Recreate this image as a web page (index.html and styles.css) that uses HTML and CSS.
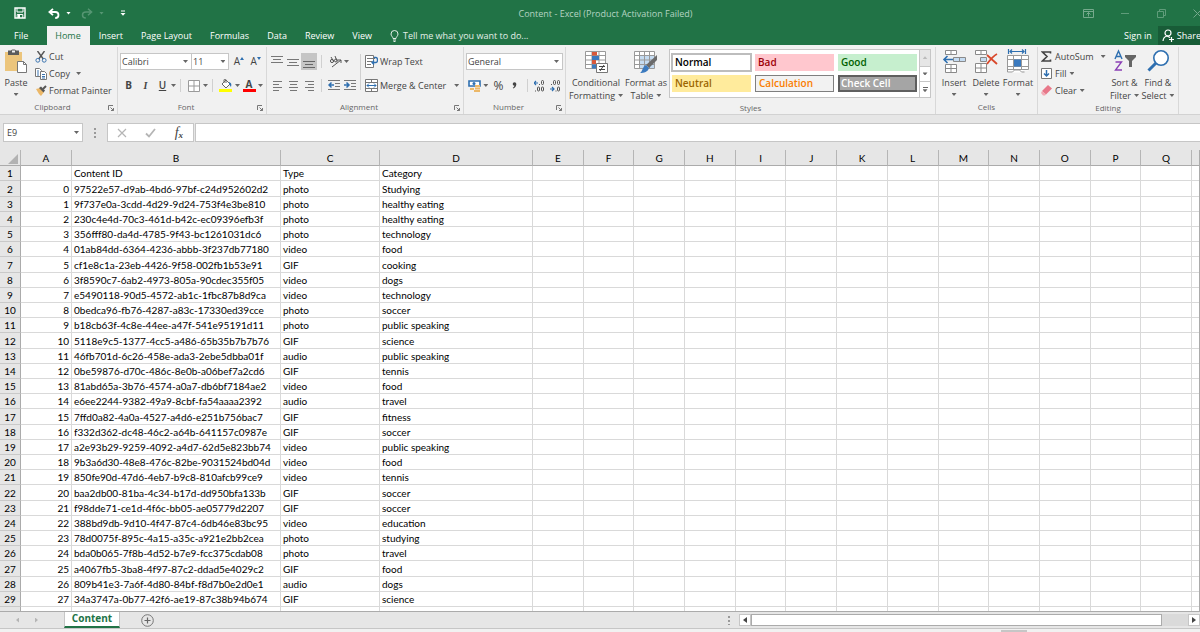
FILE: index.html
```html
<!DOCTYPE html>
<html lang="en">
<head>
<meta charset="utf-8">
<title>Content - Excel (Product Activation Failed)</title>
<link rel="stylesheet" href="styles.css">
</head>
<body>
<header class="titlebar">
  <div class="quick">
    <button class="tb save" aria-label="Save"><svg width="12" height="12" viewBox="0 0 12 12"><path d="M1 1h10v10H1z" fill="none" stroke="#fff" stroke-width="1.4"/><path d="M3 1v4h6V1M3.2 11V7.5h5.6V11" fill="none" stroke="#fff"/><path d="M4 8h2v3H4z" fill="#fff"/></svg></button>
    <button class="tb undo" aria-label="Undo"><svg width="12" height="11" viewBox="0 0 12 11"><path d="M5 .8L1.4 4 5 7.2M1.8 4h5.4c4.4 0 4.4 6 0 6" fill="none" stroke="#fff" stroke-width="1.8"/></svg></button>
    <button class="tb caret light" aria-label="Undo list"></button>
    <button class="tb redo" aria-label="Redo"><svg width="12" height="11" viewBox="0 0 12 11"><path d="M7 .8L10.600 4 7 7.200M10.200 4H4.800c-4.400 0-4.400 6 0 6" fill="none" stroke="#569673" stroke-width="1.500"/></svg></button>
    <button class="tb caret dim" aria-label="Redo list"></button>
    <button class="tb custom" aria-label="Customize"><svg width="6" height="7" viewBox="0 0 6 7"><path d="M1 1h4" stroke="#fff"/><path d="M.5 3h5L3 5.800z" fill="#fff"/></svg></button>
  </div>
  <h1 class="doc">Content - Excel (Product Activation Failed)</h1>
  <div class="winbtns">
    <button class="tb" aria-label="Ribbon options"><svg width="11" height="9" viewBox="0 0 11 9"><path d="M.5.5h10v8H.5zM.5 2.500h10M5.500 7.500v-4M3.500 5.500l2-2 2 2" fill="none" stroke="#75a98c"/></svg></button>
    <button class="tb" aria-label="Minimize"><svg width="9" height="9" viewBox="0 0 9 9"><path d="M0 4.500h8" stroke="#5f9c7a"/></svg></button>
    <button class="tb" aria-label="Restore"><svg width="9" height="9" viewBox="0 0 9 9"><path d="M.5 2.500h6v6h-6zM2.500 2.500v-2h6v6h-2" fill="none" stroke="#5f9c7a"/></svg></button>
    <button class="tb" aria-label="Close"><svg width="9" height="9" viewBox="0 0 9 9"><path d="M.5.5l8 8M8.500.5l-8 8" fill="none" stroke="#75a98c"/></svg></button>
  </div>
</header>

<nav class="tabs">
  <a class="tab file" href="#file">File</a>
  <a class="tab home" href="#home">Home</a>
  <a class="tab" href="#insert">Insert</a>
  <a class="tab" href="#layout">Page Layout</a>
  <a class="tab" href="#formulas">Formulas</a>
  <a class="tab" href="#data">Data</a>
  <a class="tab" href="#review">Review</a>
  <a class="tab" href="#view">View</a>
  <a class="tab tell" href="#tell"><svg width="9" height="12" viewBox="0 0 9 12"><path d="M3 8.500C3 7 1 6 1 4a3.500 3.500 0 0 1 7 0c0 2-2 3-2 4.500zM3 10h3M3.500 11.500h2" fill="none" stroke="#e3efe8"/></svg>Tell me what you want to do...</a>
  <a class="tab signin" href="#signin">Sign in</a>
  <a class="tab share" href="#share"><svg width="13" height="13" viewBox="0 0 13 13"><circle cx="6" cy="4" r="3" fill="none" stroke="#fff" stroke-width="1.200"/><path d="M1 12c.3-3 1.700-4.500 4-5l3 1.500M9.500 8v5M7 10.500h5" fill="none" stroke="#fff" stroke-width="1.200"/></svg>Share</a>
</nav>

<main class="ribbon">
  <section class="group clipboard">
    <div class="body">
      <button class="big paste"><svg width="24" height="25" viewBox="0 0 24 25"><path d="M1 3h17v19H1z" fill="#ecc57c"/><path d="M4 1.500h3C7 0 12 0 12 1.500h3V6H4z" fill="#5c5c5c"/><path d="M8 1.500h3v2H8z" fill="#f1f1f1"/><path d="M13.500 12.500h6l3 3v8h-9z" fill="#fff" stroke="#777"/><path d="M19.500 12.500v3h3" fill="none" stroke="#777"/></svg><span>Paste</span><i class="caret"></i></button>
      <div class="stack">
        <button class="row"><svg width="12" height="12" viewBox="0 0 12 12"><path d="M2.500 0l5.800 8M9.500 0L3.700 8" stroke="#555" stroke-width="1.400"/><circle cx="2.800" cy="9.300" r="1.900" fill="none" stroke="#3b74b0"/><circle cx="9.200" cy="9.300" r="1.900" fill="none" stroke="#3b74b0"/></svg>Cut</button>
        <button class="row"><svg width="12" height="12" viewBox="0 0 12 12"><path d="M.5.5h4l2 2v6h-6z" fill="#fff" stroke="#777"/><path d="M2 3h2M2 5h2M2 7h2" stroke="#3b74b0"/><path d="M5.500 3.500h4l2 2v6h-6z" fill="#fff" stroke="#777"/><path d="M7 6.500h3M7 8.500h3M7 10h3" stroke="#3b74b0"/></svg>Copy<i class="caret gap"></i></button>
        <button class="row"><svg width="12" height="12" viewBox="0 0 12 12"><path d="M1 4l4-1 4 4-3 4-2-2z" fill="#ecb868"/><path d="M4 3l2-1.500 4 4L8.500 7.500z" fill="#555"/><path d="M8 4l3-3" stroke="#555" stroke-width="2"/></svg>Format Painter</button>
      </div>
    </div>
    <footer>Clipboard<svg class="launch" width="6" height="6" viewBox="0 0 6 6"><path d="M.5 5V.5H5M2.500 2.500l3 3M5.500 3v2.500H3" fill="none" stroke="#777"/></svg></footer>
  </section>

  <section class="group font">
    <div class="body two">
      <div class="line">
        <label class="combo name"><select aria-label="Font"><option>Calibri</option></select></label><label class="combo size"><select aria-label="Font size"><option>11</option></select></label>
        <button class="ico growf" aria-label="Grow font">A<svg width="4" height="3" viewBox="0 0 4 3"><path d="M0 3l2-3 2 3z" fill="#2e6fb0"/></svg></button>
        <button class="ico shrinkf" aria-label="Shrink font">A<svg width="4" height="3" viewBox="0 0 4 3"><path d="M0 0h4L2 3z" fill="#2e6fb0"/></svg></button>
      </div>
      <div class="line">
        <button class="ico b">B</button><button class="ico i">I</button><button class="ico u">U</button><i class="caret"></i><i class="sep"></i>
        <button class="ico wide" aria-label="Borders"><svg width="12" height="12" viewBox="0 0 12 12"><path d="M.5.5h11v11H.5zM6 .5v11M.5 6h11" fill="#fff" stroke="#9a9a9a"/></svg></button><i class="caret"></i><i class="sep"></i>
        <button class="ico wide" aria-label="Fill color"><svg width="14" height="13" viewBox="0 0 14 13"><path d="M3 5l4-4 4 4-4 4z" fill="#fff" stroke="#666"/><path d="M5 4V1c0-1 2-1 2 0v3" fill="none" stroke="#666"/><path d="M10 3c3 1 2.500 3 2 5-1-1-1-2-2-3z" fill="#2e6fb0"/><path d="M0 10h13v3H0z" fill="#ff0"/></svg></button><i class="caret"></i>
        <button class="ico wide" aria-label="Font color"><span class="fc">A</span></button><i class="caret"></i>
      </div>
    </div>
    <footer>Font<svg class="launch" width="6" height="6" viewBox="0 0 6 6"><path d="M.5 5V.5H5M2.500 2.500l3 3M5.500 3v2.500H3" fill="none" stroke="#777"/></svg></footer>
  </section>

  <section class="group align">
    <div class="body two cols">
      <div class="pad">
        <div class="line">
          <button class="ico al" aria-label="Top align"><svg width="12" height="12" viewBox="0 0 12 12"><path d="M0 .5h12M2 3.500h8M0 6.500h12" stroke="#777"/></svg></button>
          <button class="ico al" aria-label="Middle align"><svg width="12" height="12" viewBox="0 0 12 12"><path d="M0 3.500h12M2 6.500h8M0 9.500h12" stroke="#777"/></svg></button>
          <button class="ico al on" aria-label="Bottom align"><svg width="12" height="12" viewBox="0 0 12 12"><path d="M0 5.500h12M2 8.500h8M0 11.500h12" stroke="#666"/></svg></button>
          <i class="sep"></i>
          <button class="ico wide" aria-label="Orientation"><svg width="13" height="12" viewBox="0 0 13 12"><path d="M3 11l9-7M9 4h3v3" fill="none" stroke="#555"/><circle cx="3" cy="5" r="1.600" fill="none" stroke="#555"/><path d="M2 1l3 5M6 0l2 5" stroke="#555"/><circle cx="7" cy="4.500" r="1.500" fill="none" stroke="#555"/></svg></button><i class="caret"></i>
        </div>
        <div class="line">
          <button class="ico al" aria-label="Align left"><svg width="11" height="11" viewBox="0 0 11 11"><path d="M1 1.500h9M1 4.500h6M1 7.500h9M1 10.500h6" stroke="#777"/></svg></button>
          <button class="ico al" aria-label="Center"><svg width="11" height="11" viewBox="0 0 11 11"><path d="M1 1.500h9M2 4.500h7M1 7.500h9M2 10.500h7" stroke="#777"/></svg></button>
          <button class="ico al" aria-label="Align right"><svg width="11" height="11" viewBox="0 0 11 11"><path d="M1 1.500h9M4 4.500h6M1 7.500h9M4 10.500h6" stroke="#777"/></svg></button>
          <i class="sep"></i>
          <button class="ico al" aria-label="Decrease indent"><svg width="12" height="11" viewBox="0 0 12 11"><path d="M0 .5h12M7 3.500h5M7 6.500h5M0 9.500h12" stroke="#777"/><path d="M6 5H1M3.500 2.500L1 5l2.500 2.500" fill="none" stroke="#2e6fb0" stroke-width="1.500"/></svg></button>
          <button class="ico al" aria-label="Increase indent"><svg width="12" height="11" viewBox="0 0 12 11"><path d="M0 .5h12M7 3.500h5M7 6.500h5M0 9.500h12" stroke="#777"/><path d="M0 5h5M2.500 2.500L5 5 2.500 7.500" fill="none" stroke="#2e6fb0" stroke-width="1.500"/></svg></button>
        </div>
      </div>
      <i class="sep tall"></i>
      <div class="pad merge">
        <button class="row"><svg width="13" height="13" viewBox="0 0 13 13"><path d="M.5.5h8v12h-8z" fill="#fff" stroke="#777"/><path d="M2 3.500h8M2 6.500h5M2 9.500h4" stroke="#777"/><path d="M9 2.500h2c2 0 2 5 0 5H7M9 5.500l-2 2 2 2" fill="none" stroke="#2e6fb0" stroke-width="1.300"/></svg>Wrap Text</button>
        <button class="row"><svg width="13" height="13" viewBox="0 0 13 13"><path d="M.5.5h12v12H.5zM.5 3.500h12M.5 9.500h12M6.500.5v3M6.500 9.500v3" fill="#fff" stroke="#777"/><path d="M2 6.500h9M4 4.500l-2 2 2 2M9 4.500l2 2-2 2" fill="none" stroke="#2e6fb0"/></svg>Merge &amp; Center<i class="caret gap"></i></button>
      </div>
    </div>
    <footer>Alignment<svg class="launch" width="6" height="6" viewBox="0 0 6 6"><path d="M.5 5V.5H5M2.500 2.500l3 3M5.500 3v2.500H3" fill="none" stroke="#777"/></svg></footer>
  </section>

  <section class="group number">
    <div class="body two">
      <div class="line"><label class="combo general"><select aria-label="Number format"><option>General</option></select></label></div>
      <div class="line">
        <button class="ico wide" aria-label="Accounting format"><svg width="13" height="12" viewBox="0 0 13 12"><path d="M1 1h11v5H1z" fill="#fff" stroke="#2e6fb0" stroke-width="1.600"/><circle cx="6" cy="3.500" r="1.500" fill="#2e6fb0"/><path d="M7 5h5v2H7zM7 7.500h5v2H7zM6 10h6v2H6zM2 8h4v2H2z" fill="#ecb868"/></svg></button><i class="caret"></i>
        <button class="ico pct">%</button><button class="ico comma" aria-label="Comma style"><svg width="5" height="7" viewBox="0 0 5 7"><circle cx="2.500" cy="2" r="1.800" fill="#444"/><path d="M4.200 2c.2 2-1 3.500-3 4.500l-.4-.7C2 5 2.500 4 2.500 3z" fill="#444"/></svg></button><i class="sep"></i>
        <button class="ico dec" aria-label="Increase decimal"><svg width="11" height="12" viewBox="0 0 11 12"><path d="M0 3h4M2 1L0 3l2 2" fill="none" stroke="#2e6fb0" stroke-width="1.200"/><path d="M5 4.500h1M1 11h1" stroke="#555"/><rect x="7.500" y=".5" width="2" height="4" rx="1" fill="none" stroke="#555"/><rect x="3.500" y="7" width="2" height="4" rx="1" fill="none" stroke="#555"/><rect x="7.500" y="7" width="2" height="4" rx="1" fill="none" stroke="#555"/></svg></button>
        <button class="ico dec" aria-label="Decrease decimal"><svg width="11" height="12" viewBox="0 0 11 12"><path d="M0 9h4M2 7l2 2-2 2" fill="none" stroke="#2e6fb0" stroke-width="1.200"/><path d="M5.500 11h1M1 4.500h1" stroke="#555"/><rect x="7.500" y="7" width="2" height="4" rx="1" fill="none" stroke="#555"/><rect x="3.500" y=".5" width="2" height="4" rx="1" fill="none" stroke="#555"/><rect x="7.500" y=".5" width="2" height="4" rx="1" fill="none" stroke="#555"/></svg></button>
      </div>
    </div>
    <footer>Number<svg class="launch" width="6" height="6" viewBox="0 0 6 6"><path d="M.5 5V.5H5M2.500 2.500l3 3M5.500 3v2.500H3" fill="none" stroke="#777"/></svg></footer>
  </section>

  <section class="group styles">
    <div class="body">
      <button class="big cond"><svg width="24" height="25" viewBox="0 0 24 25"><path d="M1.500 2.500h20v17h-20zM1.500 6.500h20M1.500 11h20M1.500 15.500h20M8 2.500v17M15 2.500v17" fill="#fff" stroke="#999"/><path d="M8 3h5v3.500H8zM8 11h4v4H8z" fill="#d9583a"/><path d="M8 7h7v4H8zM8 15.500h4v4H8z" fill="#3b7abf"/><path d="M12.500 14.500h11v9h-11z" fill="#fff" stroke="#777"/><path d="M15 17.500h6M15 20.500h6M20 16l-4 6" stroke="#444"/></svg><span>Conditional</span><span>Formatting<i class="caret"></i></span></button>
      <button class="big fmt"><svg width="26" height="25" viewBox="0 0 26 25"><path d="M1.500 2.500h20v17h-20z" fill="#fff"/><path d="M6 7h16v12H6z" fill="#c5dcf2"/><path d="M1.500 2.500h20v17h-20zM1.500 6.500h20M1.500 11h20M1.500 15.500h20M6.500 2.500v17M11.500 2.500v17M16.500 2.500v17" fill="none" stroke="#999"/><path d="M24 6v5l-8 8-3-3z" fill="#6b6b6b"/><path d="M13 16l3 3c-1 4-5 5-9 5 3-2 2-6 6-8z" fill="#3b7abf"/></svg><span>Format as</span><span>Table<i class="caret"></i></span></button>
      <div class="gallery">
        <div class="swatches">
          <button class="sw normal">Normal</button><button class="sw bad">Bad</button><button class="sw good">Good</button>
          <button class="sw neutral">Neutral</button><button class="sw calc">Calculation</button><button class="sw check">Check Cell</button>
        </div>
        <div class="scroll"><button aria-label="Scroll up"><i class="caret up"></i></button><button aria-label="Scroll down"><i class="caret"></i></button><button class="more" aria-label="More styles"><i class="caret"></i></button></div>
      </div>
    </div>
    <footer>Styles</footer>
  </section>

  <section class="group cells">
    <div class="body">
      <button class="big"><svg width="24" height="25" viewBox="0 0 24 25"><path d="M3.500 1.500h11v4h-11zM9 1.500v4M3.500 15.500h11v8h-11zM3.500 19.500h11M9 15.500v8" fill="#fff" stroke="#8a8a8a"/><path d="M11.500 8.500h12v4h-12zM17.500 8.500v4" fill="#c5dcf2" stroke="#8a8a8a"/><path d="M11 10.500H2M5.500 7L2 10.500 5.500 14" fill="none" stroke="#2e6fb0" stroke-width="1.600"/></svg><span>Insert</span><i class="caret"></i></button>
      <button class="big"><svg width="24" height="25" viewBox="0 0 24 25"><path d="M1.500 1.500h11v4h-11zM7 1.500v4M1.500 14.500h11v9h-11zM1.500 19h11M7 14.500v9" fill="#fff" stroke="#8a8a8a"/><path d="M6.500 8.500h6v4h-6z" fill="#c5dcf2" stroke="#8a8a8a"/><path d="M13 6l10 9M23 5c-4 2-7 6-10 10" fill="none" stroke="#d9482b" stroke-width="1.800"/></svg><span>Delete</span><i class="caret"></i></button>
      <button class="big"><svg width="24" height="25" viewBox="0 0 24 25"><path d="M2.500 0v5M19.500 0v5M4 2.500h14M6 .5l-2 2 2 2M16 .5l2 2-2 2" fill="none" stroke="#2e6fb0" stroke-width="1.200"/><path d="M1.500 6.500h21v15h-5l-2 2h-14z" fill="#fff"/><path d="M1.500 6.500h21v14h-21zM7.500 6.500v14M15.500 6.500v14M1.500 10.500h21M1.500 17.500h21M1.500 20v3h5l2-2h5l2 2h3" fill="none" stroke="#999"/><path d="M8 10.500h7v7H8z" fill="#3b7abf"/></svg><span>Format</span><i class="caret"></i></button>
    </div>
    <footer>Cells</footer>
  </section>

  <section class="group editing">
    <div class="body">
      <div class="stack">
        <button class="row"><svg width="11" height="11" viewBox="0 0 11 11"><path d="M9.500 2.500V1h-8L6 5.500 1.500 10h8V8.500" fill="none" stroke="#444" stroke-width="1.600"/></svg>AutoSum<i class="caret gap"></i></button>
        <button class="row"><svg width="11" height="11" viewBox="0 0 11 11"><path d="M.5.5h10v10H.5z" fill="#fff" stroke="#777"/><path d="M5.500 2v6M3 5.500L5.500 8 8 5.500" fill="none" stroke="#2e6fb0" stroke-width="1.500"/></svg>Fill<i class="caret"></i></button>
        <button class="row"><svg width="11" height="11" viewBox="0 0 11 11"><path d="M7 0l4 3.500-6 6L1 6z" fill="#e8788a"/><path d="M1 6l4 3.500-1 1H2L0 8z" fill="#f3a9b4"/></svg>Clear<i class="caret"></i></button>
      </div>
      <button class="big sort"><svg width="24" height="25" viewBox="0 0 24 25"><path d="M2 10L5.500 2 9 10M3.200 7.500h4.600" fill="none" stroke="#2e6fb0" stroke-width="1.400"/><path d="M2.500 13h6L2.500 21h6.500" fill="none" stroke="#8a3fb5" stroke-width="1.400"/><path d="M12 6h11v2l-4 4v6h-3v-6l-4-4z" fill="#666"/></svg><span>Sort &amp;</span><span>Filter<i class="caret"></i></span></button>
      <button class="big find"><svg width="24" height="25" viewBox="0 0 24 25"><circle cx="15" cy="9" r="7.200" fill="#fff" stroke="#2e6fb0" stroke-width="1.600"/><path d="M10 14l-7.500 7.500" stroke="#2e6fb0" stroke-width="3"/></svg><span>Find &amp;</span><span>Select<i class="caret"></i></span></button>
    </div>
    <footer>Editing</footer>
  </section>
</main>

<div class="formula">
  <label class="combo cellname"><select aria-label="Name box"><option>E9</option></select></label>
  <i class="dots"></i>
  <div class="fx">
    <button aria-label="Cancel"><svg width="10" height="10" viewBox="0 0 10 10"><path d="M1 1l8 8M9 1L1 9" stroke="#b5b5b5" stroke-width="1.200"/></svg></button>
    <button aria-label="Enter"><svg width="11" height="10" viewBox="0 0 11 10"><path d="M1 5.500L4 8.500 10 1" fill="none" stroke="#b5b5b5" stroke-width="1.800"/></svg></button>
    <button class="fn" aria-label="Insert function">f<small>x</small></button>
  </div>
  <input class="finput" aria-label="Formula bar">
</div>

<div class="sheet">
  <table>
    <colgroup id="cols"></colgroup>
    <thead><tr id="head"></tr></thead>
    <tbody id="rows"></tbody>
  </table>
</div>

<footer class="bottom">
  <div class="navs"><button aria-label="Previous sheet"><i class="tri left"></i></button><button aria-label="Next sheet"><i class="tri right"></i></button></div>
  <a class="sheettab" href="#content">Content</a>
  <button class="add" aria-label="New sheet"><svg width="13" height="13" viewBox="0 0 13 13"><circle cx="6.500" cy="6.500" r="5.800" fill="none" stroke="#777"/><path d="M6.500 3.500v6M3.500 6.500h6" stroke="#666" stroke-width="1.200"/></svg></button>
  <i class="dots"></i>
  <div class="hbar"><button aria-label="Scroll left"><i class="tri left dark"></i></button><span class="thumb"></span><button aria-label="Scroll right"><i class="tri right dark"></i></button></div>
</footer>
<div class="status"><i></i></div>
<script src="app.js"></script>
</body>
</html>
```

FILE: styles.css
```css
* { box-sizing: border-box; }
html, body { height: 100%; }
body { margin: 0; display: flex; flex-direction: column; overflow: hidden; background: #e6e6e6; color: #444; font: 9px/13px "Open Sans", "Noto Sans", sans-serif; }
button, select, input { font: inherit; color: inherit; background: none; border: 0; padding: 0; margin: 0; border-radius: 0; }
button { display: flex; align-items: center; justify-content: center; }
a { color: inherit; text-decoration: none; }
svg { display: block; flex: none; }
i { flex: none; }

.caret { display: inline-block; width: 5px; height: 3px; background: #666; clip-path: polygon(0 0, 100% 0, 50% 100%); }
.caret.up { clip-path: polygon(0 100%, 100% 100%, 50% 0); background: #bbb; }
.caret.light { background: #fff; }
.caret.dim { background: #569673; }
.caret.gap { margin-left: 4px; }

/* Title bar */
.titlebar { flex: none; height: 26px; background: #217346; display: grid; grid-template-columns: 1fr auto 1fr; align-items: center; color: #b5d3c2; }
.quick { display: flex; align-items: center; padding-left: 14px; }
.undo { margin-left: 22px; }
.quick .caret { margin-left: 6px; }
.redo { margin-left: 10px; }
.custom { margin-left: 16px; }
.doc { margin: 0; padding-left: 11px; font-size: 9px; font-weight: 400; }
.winbtns { display: flex; justify-content: flex-end; gap: 27px; margin-right: -2px; }

/* Ribbon tabs */
.tabs { flex: none; height: 19px; background: #217346; color: #fff; display: flex; }
.tab { display: flex; align-items: center; padding: 0 9px; }
.file { padding: 0 19px 0 14px; }
.home { background: #f1f1f1; color: #217346; padding: 0 9px 0 8px; }
.tell { gap: 4px; color: #e3efe8; }
.signin { margin-left: auto; padding: 0 6px; }
.share { background: #185c37; padding: 0 0 0 4px; gap: 2px; margin-right: -1px; }

/* Ribbon */
.ribbon { flex: none; height: 70px; background: #f1f1f1; border-bottom: 1px solid #d2d2d2; display: flex; padding-top: 2px; }
.group { flex: none; display: flex; flex-direction: column; border-right: 1px solid #d8d8d8; }
.body { flex: 1; display: flex; }
.group footer { position: relative; height: 13px; font-size: 8px; line-height: 11px; text-align: center; color: #666; padding-right: 12px; }
.launch { position: absolute; right: 3px; top: 4px; }
.clipboard { width: 118px; }
.font { width: 149px; }
.align { width: 197px; }
.number { width: 102px; }
.styles { flex: 1; }
.cells { width: 102px; }
.editing { width: 141px; margin-right: 21px; }
.group.styles footer, .group.cells footer, .group.editing footer { padding-right: 0; }

.big { flex: none; flex-direction: column; justify-content: flex-start; width: 32px; padding-top: 2px; white-space: nowrap; }
.big svg { margin-bottom: 2px; }
.big > span { display: block; line-height: 13px; }
.big > .caret { margin-top: 4px; }
.big span .caret { margin: 0 0 2px 3px; }
.stack { display: flex; flex-direction: column; padding-top: 1px; margin-left: 3px; }
.row { height: 17px; gap: 2px; justify-content: flex-start; white-space: nowrap; }
.two { flex-direction: column; padding: 5px 2px 0; gap: 5px; }
.line { display: flex; align-items: center; height: 19px; }
.ico { width: 17px; height: 17px; font-size: 10px; }
.wide { width: 18px; }
.sep { width: 1px; height: 13px; background: #d0d0d0; margin: 0 4px; }
.b, .fc { font-weight: 700; }
.i { font-weight: 700; font-style: italic; font-family: "Liberation Serif", serif; }
.u { font-weight: 600; text-decoration: underline; }
.fc { border-bottom: 3px solid #f00; line-height: 10px; width: 13px; }
.growf { margin-left: 1px; }
.growf svg, .shrinkf svg { margin-bottom: 7px; }

.combo { position: relative; display: flex; height: 17px; background: #fff; border: 1px solid #c6c6c6; }
.combo select { appearance: none; width: 100%; padding-left: 1px; outline: 0; }
.combo::after { content: ""; position: absolute; right: 3px; top: 6px; width: 5px; height: 3px; background: #666; clip-path: polygon(0 0, 100% 0, 50% 100%); pointer-events: none; }
.name { width: 73px; }
.size { width: 39px; margin-left: -1px; }
.general { width: 97px; }

.cols { flex-direction: row; gap: 0; }
.pad { display: flex; flex-direction: column; gap: 5px; }
.al { width: 16px; }
.on { background: #c5c5c5; }
.tall { height: 36px; margin: 2px 4px 2px 2px; }
.merge .row { height: 19px; }
.merge .caret { margin-left: 6px; }
.pct { font-size: 12px; margin-left: 2px; }
.dec { width: 16px; }

.cond { width: 54px; margin-left: 3px; }
.fmt { width: 46px; }
.gallery { display: flex; flex: 1; height: 49px; margin: 2px 4px 0 0; background: #fff; border: 1px solid #c6c6c6; }
.swatches { flex: 1; display: grid; grid-template-columns: repeat(3, 1fr); grid-template-rows: 17px 17px; gap: 4px; padding: 4px 2px; font-size: 10px; font-weight: 600; }
.sw { justify-content: flex-start; padding-left: 3px; }
.normal { color: #000; outline: 2px solid #bdbdbd; outline-offset: -1px; }
.bad { background: #ffc7ce; color: #9c0006; }
.good { background: #c6efce; color: #006100; }
.neutral { background: #ffeb9c; color: #9c6500; }
.calc { background: #f2f2f2; color: #fa7d00; border: 1px solid #7f7f7f; }
.check { background: #a5a5a5; color: #fff; border: 2px solid #5f5f5f; padding-left: 1px; }
.scroll { width: 11px; display: grid; grid-template-rows: repeat(3, 1fr); border-left: 1px solid #c6c6c6; }
.scroll button + button { border-top: 1px solid #c6c6c6; }
.scroll button:first-child { background: #e6e6e6; }
.more { flex-direction: column; gap: 1px; }
.more::before { content: ""; width: 5px; height: 1px; background: #666; }

.cells .body { padding-left: 2px; }
.editing .stack { width: 65px; }
.editing .row { gap: 3px; }
.sort { width: 37px; }
.find { width: 30px; }

/* Formula bar */
.formula { flex: none; height: 35px; display: flex; align-items: center; padding-left: 3px; }
.formula > * { height: 19px; }
.cellname { width: 80px; }
.cellname select { padding-left: 3px; }
.cellname::after { top: 7px; }
.dots { width: 2px; height: 9px; background: repeating-linear-gradient(#999 0 2px, transparent 2px 4px); }
.formula .dots { height: 10px; margin: 0 11px; }
.fx { display: flex; width: 87px; background: #fff; border: 1px solid #c6c6c6; margin-right: 1px; }
.fx button { flex: 1; }
.fn { font: italic 14px/16px "Liberation Serif", serif; }
.fn small { font-size: 9px; font-weight: 700; padding-top: 4px; }
.finput { flex: 1; background: #fff; border: 1px solid #c6c6c6; border-right: 0; }

/* Grid */
.sheet { flex: 1; min-height: 0; overflow: hidden; background: #fff; border-bottom: 1px solid #ababab; border-right: 1px solid #ababab; }
table { width: 100%; table-layout: fixed; border-collapse: separate; border-spacing: 0; color: #000; font: 10px/14px Lato, "Open Sans", sans-serif; }
.c-head { width: 21px; }
.c-a { width: 51px; }
.c-b { width: 209px; }
.c-c { width: 99px; }
.c-d { width: 153px; }
.c-end { width: 7px; }
th, td { height: 15px; padding: 0 2px; border-right: 1px solid #d9d9d9; border-bottom: 1px solid #d9d9d9; text-align: left; font-weight: 400; white-space: nowrap; }
tbody tr:nth-child(5n + 2) td { height: 16px; }
td:last-child, thead th:last-child { border-right: 0; }
th { background: #e6e6e6; text-align: center; padding: 0; border-color: #c9c9c9; }
thead th { height: 16px; border-bottom-color: #ababab; border-right-color: #b5b5b5; }
tbody th { border-right-color: #ababab; }
.num { text-align: right; }
.corner { width: 10px; height: 10px; margin: 3px 2px 0 auto; background: #b2b2b2; clip-path: polygon(100% 0, 100% 100%, 0 100%); }

/* Sheet tabs */
.bottom { flex: none; height: 17px; display: flex; align-items: center; border-bottom: 1px solid #c6c6c6; }
.navs { display: flex; width: 64px; padding-left: 16px; gap: 16px; }
.tri { width: 3px; height: 5px; background: #b5b5b5; }
.tri.left { clip-path: polygon(100% 0, 100% 100%, 0 50%); }
.tri.right { clip-path: polygon(0 0, 0 100%, 100% 50%); }
.tri.dark { background: #444; width: 4px; height: 6px; }
.sheettab { align-self: stretch; width: 56px; background: #fff; color: #217346; border: 1px solid #c6c6c6; border-top: 0; border-bottom: 2px solid #217346; text-align: center; font: 700 10px/13px "Open Sans", sans-serif; }
.add { margin-left: 21px; }
.bottom .dots { margin-left: auto; margin-right: 9px; }
.hbar { width: calc(38% + 5px); height: 12px; display: flex; background: #dadada; }
.hbar button { width: 12px; background: #fff; border: 1px solid #c6c6c6; }
.thumb { flex: 1; margin-right: 26px; background: #fff; border: 1px solid #ababab; }
.status { flex: none; height: 3px; background: #f1f1f1; display: flex; justify-content: flex-end; }
.status i { width: 26px; height: 2px; margin: 1px 173px 0 0; background: #c6c6c6; }
```

FILE: app.js
```js
const records = `97522e57-d9ab-4bd6-97bf-c24d952602d2|photo|Studying
9f737e0a-3cdd-4d29-9d24-753f4e3be810|photo|healthy eating
230c4e4d-70c3-461d-b42c-ec09396efb3f|photo|healthy eating
356fff80-da4d-4785-9f43-bc1261031dc6|photo|technology
01ab84dd-6364-4236-abbb-3f237db77180|video|food
cf1e8c1a-23eb-4426-9f58-002fb1b53e91|GIF|cooking
3f8590c7-6ab2-4973-805a-90cdec355f05|video|dogs
e5490118-90d5-4572-ab1c-1fbc87b8d9ca|video|technology
0bedca96-fb76-4287-a83c-17330ed39cce|photo|soccer
b18cb63f-4c8e-44ee-a47f-541e95191d11|photo|public speaking
5118e9c5-1377-4cc5-a486-65b35b7b7b76|GIF|science
46fb701d-6c26-458e-ada3-2ebe5dbba01f|audio|public speaking
0be59876-d70c-486c-8e0b-a06bef7a2cd6|GIF|tennis
81abd65a-3b76-4574-a0a7-db6bf7184ae2|video|food
e6ee2244-9382-49a9-8cbf-fa54aaaa2392|audio|travel
7ffd0a82-4a0a-4527-a4d6-e251b756bac7|GIF|fitness
f332d362-dc48-46c2-a64b-641157c0987e|GIF|soccer
a2e93b29-9259-4092-a4d7-62d5e823bb74|video|public speaking
9b3a6d30-48e8-476c-82be-9031524bd04d|video|food
850fe90d-47d6-4eb7-b9c8-810afcb99ce9|video|tennis
baa2db00-81ba-4c34-b17d-dd950bfa133b|GIF|soccer
f98dde71-ce1d-4f6c-bb05-ae05779d2207|GIF|soccer
388bd9db-9d10-4f47-87c4-6db46e83bc95|video|education
78d0075f-895c-4a15-a35c-a921e2bb2cea|photo|studying
bda0b065-7f8b-4d52-b7e9-fcc375cdab08|photo|travel
a4067fb5-3ba8-4f97-87c2-ddad5e4029c2|GIF|food
809b41e3-7a6f-4d80-84bf-f8d7b0e2d0e1|audio|dogs
34a3747a-0b77-42f6-ae19-87c38b94b674|GIF|science`.split("\n").map(line => line.split("|"));

const letters = [..."ABCDEFGHIJKLMNOPQ"];
const extra = letters.length - 4;

document.getElementById("cols").innerHTML =
  ["head", "a", "b", "c", "d"].map(c => `<col class="c-${c}">`).join("") +
  "<col>".repeat(extra) + '<col class="c-end">';

document.getElementById("head").innerHTML =
  '<th><div class="corner"></div></th>' +
  letters.map(l => `<th scope="col">${l}</th>`).join("") + "<th></th>";

const row = (n, cells) =>
  `<tr><th scope="row">${n}</th><td class="num">${cells[0]}</td>` +
  cells.slice(1).map(c => `<td>${c}</td>`).join("") +
  "<td></td>".repeat(extra + 1) + "</tr>";

document.getElementById("rows").innerHTML =
  row(1, ["", "Content ID", "Type", "Category"]) +
  records.map((r, i) => row(i + 2, [i, ...r])).join("") +
  row(30, ["", "", "", ""]);
```
